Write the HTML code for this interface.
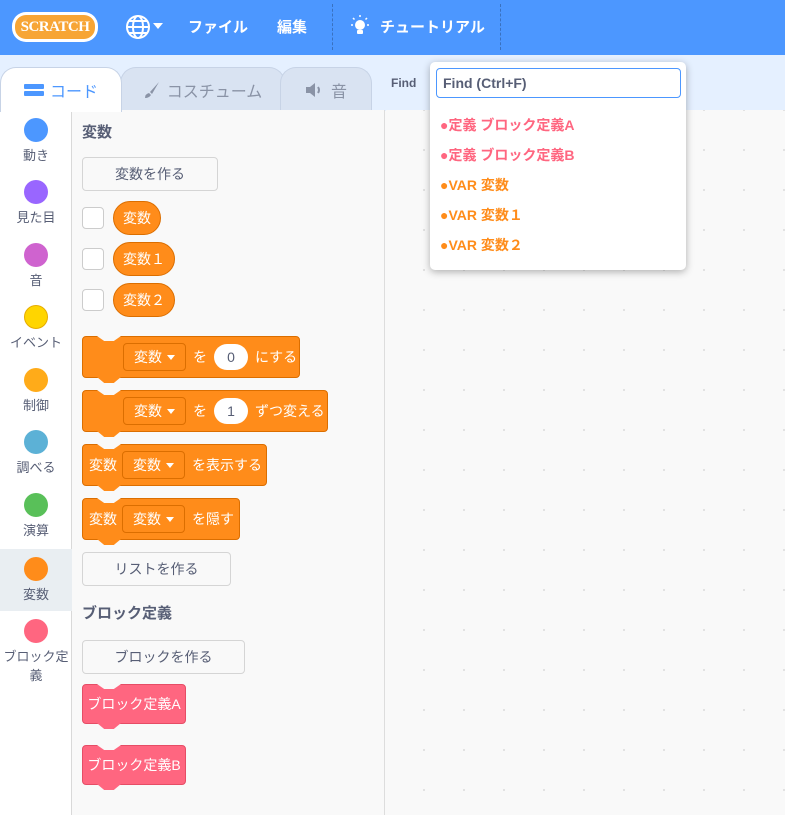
<!DOCTYPE html>
<html><head><meta charset="utf-8"><style>
*{box-sizing:border-box;margin:0;padding:0}
body{width:785px;height:815px;overflow:hidden;font-family:"Liberation Sans","Noto Sans CJK JP",sans-serif;background:#f9f9f9;position:relative}
.a{position:absolute}
.hdr{left:0;top:0;width:785px;height:55px;background:#4c97ff;color:#fff;font-weight:bold;font-size:15px}
.tabs{left:0;top:55px;width:785px;height:56px;background:#e5f0ff}
.tab{position:absolute;top:12px;height:44px;border:1px solid #c7d3e6;border-bottom:none;border-radius:16px 16px 0 0;background:#d9e3f2;color:#8a93a6;font-size:16px;display:flex;align-items:center;justify-content:center;gap:6px}
.cats{left:0;top:110px;width:72px;height:705px;background:#fff;border-right:1px solid #d9d9d9}
.cat{position:absolute;left:0;width:72px;height:62px;text-align:center;font-size:13px;color:#575e75}
.cat i{display:block;width:24px;height:24px;border-radius:50%;margin:8px auto 3px}
.pal{left:72px;top:110px;width:313px;height:705px;background:#f9f9f9;border-right:1px solid #ddd}
.ws{left:386px;top:110px;width:399px;height:705px;background-color:#f9f9f9;background-image:radial-gradient(#e0e0e0 1px,transparent 1.2px);background-size:40px 40px;background-position:18px 20px}
.btn{position:absolute;left:82px;height:34px;border:1px solid #d5d5d5;border-radius:4px;background:#f9f9f9;font-size:14px;color:#575e75;display:flex;align-items:center;justify-content:center}
.h{position:absolute;left:82px;font-size:15px;font-weight:bold;color:#575e75}
.cb{position:absolute;left:82px;width:22px;height:22px;border:1px solid #ccc;border-radius:4px;background:#fff}
.rep{position:absolute;left:113px;height:34px;border-radius:17px;background:#ff8c1a;border:1px solid #db6e00;color:#fff;font-size:14px;display:flex;align-items:center;padding:0 9px;white-space:nowrap}
.blk{position:absolute;left:82px;height:42px;background:#ff8c1a;border:1px solid #db6e00;border-radius:4px;color:#fff;font-size:14px;display:flex;align-items:center;padding-left:6px;white-space:nowrap}
.blk:before{content:"";position:absolute;left:14px;top:-1px;width:24px;height:5px;background:#f9f9f9;clip-path:polygon(0 0,100% 0,70% 100%,30% 100%)}
.blk:after{content:"";position:absolute;left:14px;bottom:-6px;width:24px;height:6px;background:#ff8c1a;clip-path:polygon(0 0,100% 0,70% 100%,30% 100%)}
.dd{width:63px;height:28px;border:1px solid #db6e00;border-radius:4px;display:flex;align-items:center;justify-content:center;gap:5px;margin-right:7px}
.dd b{width:0;height:0;border-left:4px solid transparent;border-right:4px solid transparent;border-top:5px solid #fff}
.num{width:34px;height:26px;border-radius:13px;background:#fff;color:#575e75;display:flex;align-items:center;justify-content:center;margin:0 7px}
.pk{position:absolute;left:82px;width:104px;height:40px;background:#ff6680;border:1px solid #e64d66;border-radius:4px;color:#fff;font-size:14px;display:flex;align-items:center;justify-content:center;white-space:nowrap}
.pk:before{content:"";position:absolute;left:14px;top:-1px;width:24px;height:5px;background:#f9f9f9;clip-path:polygon(0 0,100% 0,70% 100%,30% 100%)}
.pk:after{content:"";position:absolute;left:14px;bottom:-6px;width:24px;height:6px;background:#ff6680;clip-path:polygon(0 0,100% 0,70% 100%,30% 100%)}
.pop{left:430px;top:62px;width:256px;height:208px;background:#fff;border-radius:5px;box-shadow:0 2px 8px rgba(0,0,0,.3)}
.pop .in{position:absolute;left:6px;top:6px;width:245px;height:30px;border:1px solid #4c97ff;border-radius:4px;font-size:14px;font-weight:bold;color:#575e75;padding:6px 6px}
.it{position:absolute;left:10px;font-size:14px;font-weight:bold}
</style></head><body>
<div class="a hdr">
 <div class="a" style="left:12px;top:12px;width:86px;height:30px;background:#fff;border-radius:14px"></div>
 <div class="a" style="left:15px;top:15px;width:80px;height:24px;background:#f7a535;border-radius:11px;color:#fff;font-size:15px;font-weight:bold;text-align:center;line-height:24px;letter-spacing:-0.5px;font-family:'Liberation Serif',serif">SCRATCH</div>
 <svg class="a" style="left:125px;top:14px" width="26" height="26" viewBox="0 0 26 26" fill="none" stroke="#fff" stroke-width="2"><circle cx="13" cy="13" r="11"/><ellipse cx="13" cy="13" rx="5" ry="11"/><line x1="2" y1="13" x2="24" y2="13"/><line x1="4" y1="7" x2="22" y2="7"/><line x1="4" y1="19" x2="22" y2="19"/></svg>
 <div class="a" style="left:153px;top:23px;border-left:5px solid transparent;border-right:5px solid transparent;border-top:6px solid #fff"></div>
 <div class="a" style="left:188px;top:16px">ファイル</div>
 <div class="a" style="left:277px;top:16px">編集</div>
 <div class="a" style="left:332px;top:4px;height:46px;border-left:1px dashed rgba(0,0,0,.25)"></div>
 <svg class="a" style="left:348px;top:14px" width="24" height="26" viewBox="0 0 24 26" fill="#fff"><circle cx="12" cy="11" r="5"/><rect x="9" y="16" width="6" height="4" rx="1"/><g stroke="#fff" stroke-width="1.5"><line x1="12" y1="1" x2="12" y2="3"/><line x1="3" y1="11" x2="5" y2="11"/><line x1="19" y1="11" x2="21" y2="11"/><line x1="5" y1="4" x2="6.5" y2="5.5"/><line x1="19" y1="4" x2="17.5" y2="5.5"/></g></svg>
 <div class="a" style="left:380px;top:16px">チュートリアル</div>
 <div class="a" style="left:500px;top:4px;height:46px;border-left:1px dashed rgba(0,0,0,.25)"></div>
</div>
<div class="a tabs">
 <div class="tab" style="left:0;width:122px;background:#fff;color:#4c97ff;height:45px;z-index:2"><svg width="20" height="14"><rect x="0" y="1" width="20" height="5" rx="1" fill="#4c97ff"/><rect x="0" y="8" width="20" height="5" rx="1" fill="#4c97ff"/></svg>コード</div>
 <div class="tab" style="left:120px;width:165px"><svg width="18" height="18"><path d="M16 1 L7 11 L9 13 Z M6 12 Q2 13 2 17 Q6 17 8 14 Z" fill="#8a93a6"/></svg>コスチューム</div>
 <div class="tab" style="left:280px;width:92px"><svg width="20" height="16"><path d="M1 5h4l5-4v14l-5-4H1z" fill="#8a93a6"/><path d="M13 5q2 3 0 6" stroke="#8a93a6" stroke-width="2" fill="none"/></svg>音</div>
 <div class="a" style="left:391px;top:21px;font-size:12px;font-weight:bold;color:#575e75">Find</div>
</div>
<div class="a cats">
 <div class="cat" style="top:0"><i style="background:#4c97ff"></i>動き</div>
 <div class="cat" style="top:62px"><i style="background:#9966ff"></i>見た目</div>
 <div class="cat" style="top:125px"><i style="background:#cf63cf"></i>音</div>
 <div class="cat" style="top:187px"><i style="background:#ffd500;border:1px solid #e6ac00"></i>イベント</div>
 <div class="cat" style="top:250px"><i style="background:#ffab19"></i>制御</div>
 <div class="cat" style="top:312px"><i style="background:#5cb1d6"></i>調べる</div>
 <div class="cat" style="top:375px"><i style="background:#59c059"></i>演算</div>
 <div class="cat" style="top:439px;background:#e9eef2"><i style="background:#ff8c1a"></i>変数</div>
 <div class="cat" style="top:501px"><i style="background:#ff6680"></i>ブロック定<br>義</div>
</div>
<div class="a pal"></div>
<div class="a ws"></div>
<div class="h" style="top:121px">変数</div>
<div class="btn" style="top:157px;width:136px">変数を作る</div>
<div class="cb" style="top:207px"></div><div class="rep" style="top:201px;width:48px">変数</div>
<div class="cb" style="top:248px"></div><div class="rep" style="top:242px;width:62px">変数１</div>
<div class="cb" style="top:289px"></div><div class="rep" style="top:283px;width:62px">変数２</div>
<div class="blk" style="top:336px;width:218px;padding-left:40px"><div class="dd">変数<b></b></div>を<div class="num">0</div>にする</div>
<div class="blk" style="top:390px;width:246px;padding-left:40px"><div class="dd">変数<b></b></div>を<div class="num">1</div>ずつ変える</div>
<div class="blk" style="top:444px;width:185px"><span style="margin-right:5px">変数</span><div class="dd">変数<b></b></div>を表示する</div>
<div class="blk" style="top:498px;width:158px"><span style="margin-right:5px">変数</span><div class="dd">変数<b></b></div>を隠す</div>
<div class="btn" style="top:552px;width:149px">リストを作る</div>
<div class="h" style="top:602px">ブロック定義</div>
<div class="btn" style="top:640px;width:163px">ブロックを作る</div>
<div class="pk" style="top:684px">ブロック定義A</div>
<div class="pk" style="top:745px">ブロック定義B</div>
<div class="a pop">
 <div class="in">Find (Ctrl+F)</div>
 <div class="it" style="top:53px;color:#ff6680">●定義 ブロック定義A</div>
 <div class="it" style="top:83px;color:#ff6680">●定義 ブロック定義B</div>
 <div class="it" style="top:113px;color:#ff8c1a">●VAR 変数</div>
 <div class="it" style="top:143px;color:#ff8c1a">●VAR 変数１</div>
 <div class="it" style="top:173px;color:#ff8c1a">●VAR 変数２</div>
</div>
</body></html>
